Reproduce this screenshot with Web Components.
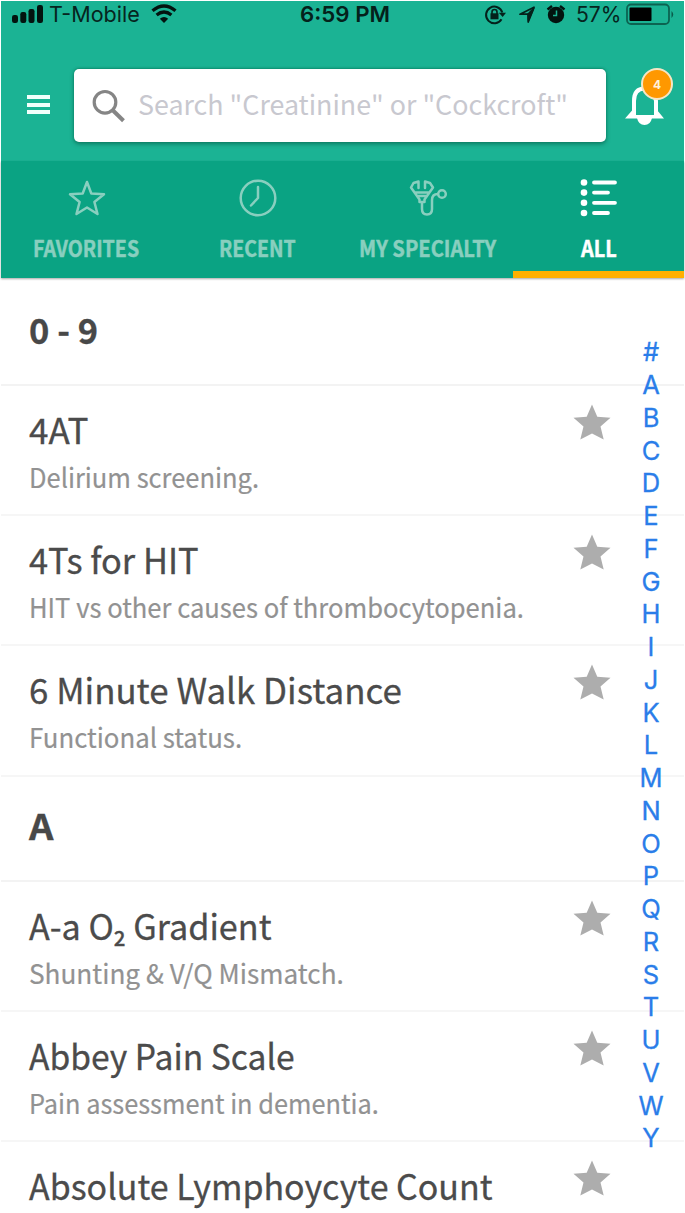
<!DOCTYPE html>
<html lang="en">
<head>
<meta charset="utf-8">
<title>Calculators</title>
<style>
html, body { margin: 0; height: 1213px; overflow: hidden; background: #fff; }
body { font-family: "Noto Sans CJK JP", "Noto Sans", sans-serif; }
</style>
</head>
<body>
<calc-app></calc-app>
<script>
const define = (name, html, setup) => customElements.define(name, class extends HTMLElement {
  connectedCallback() {
    if (this.shadowRoot) return;
    this.attachShadow({ mode: 'open' }).innerHTML = html;
    if (setup) setup(this, this.shadowRoot);
  }
});

/* Text condensed or widened to a given advance width */
define('fit-text', `
<style>
:host { display: inline-block; white-space: nowrap; }
span { display: inline-block; transform-origin: 0 50%; white-space: pre; }
</style><span><slot></slot></span>`, (host, root) => {
  const span = root.querySelector('span');
  const target = +host.getAttribute('width');
  const natural = span.offsetWidth;
  if (target && natural) {
    span.style.transform = `scaleX(${target / natural})`;
    host.style.width = target + 'px';
  }
});

define('status-bar', `
<style>
:host { display: grid; grid-template-columns: 1fr auto 1fr; align-items: center; height: 27px; padding: 0 9px 0 11px;
  font: 400 22px/27px Inter, "Liberation Sans", sans-serif; color: #06251e; box-sizing: border-box; }
div { display: flex; align-items: center; }
svg { display: block; flex: none; }
.time { font-weight: 600; color: #04211b; padding-left: 2px; }
.right { justify-content: flex-end; }
</style>
<div>
  <svg width="32" height="27" viewBox="0 0 32 27" fill="#03130f"><rect x="0" y="14" width="6" height="8" rx="2.2"/><rect x="8.3" y="11" width="6" height="11" rx="2.2"/><rect x="16.5" y="8" width="6" height="14" rx="2.2"/><rect x="25" y="4" width="6" height="18" rx="2.2"/></svg>
  <fit-text width="91" style="margin-left:5px">T-Mobile</fit-text>
  <svg width="28" height="27" viewBox="0 0 28 27" style="margin-left:10px" fill="none" stroke="#03130f" stroke-width="3.3"><path d="M2.5 9.8Q14 .2 25.500 9.800M6.600 14Q14 8 21.400 14"/><path d="M14 22L9.800 17.800Q14 14.200 18.200 17.800Z" fill="#03130f" stroke="none"/></svg>
</div>
<div class="time"><fit-text width="90">6:59 PM</fit-text></div>
<div class="right">
  <svg width="22" height="27" viewBox="0 0 22 27" fill="none" stroke="#04211b"><path d="M17.500 18.200A8.300 8.300 0 1 1 18.300 11.500" stroke-width="2"/><path d="M14.800 11.800H22L18.700 16Z" fill="#04211b" stroke="none"/><rect x="6.500" y="12.300" width="8" height="6" fill="#04211b" stroke="none"/><path d="M8 13V11Q8 8.500 10.500 8.500T13 11V13" stroke-width="1.600"/></svg>
  <svg width="18" height="27" viewBox="0 0 18 27" style="margin-left:12px" fill="none" stroke="#04211b" stroke-width="1.800" stroke-linejoin="round"><path d="M2 13.200L16 6.300L10.200 21V13.200Z"/><path d="M10.200 13L15.500 7.500L10.500 19Z" fill="#04211b"/></svg>
  <svg width="20" height="27" viewBox="0 0 20 27" style="margin-left:10px"><circle cx="10" cy="14" r="8.200" fill="#03130f"/><path d="M1.500 8.500L6 5M18.500 8.500L14 5" stroke="#03130f" stroke-width="2.400"/><path d="M10.500 9.500V14.500H7" fill="none" stroke="#1bb394" stroke-width="1.500"/></svg>
  <fit-text width="45" style="margin-left:10px">57%</fit-text>
  <svg width="49" height="27" viewBox="0 0 49 27" style="margin-left:5px"><rect x="1" y="3.500" width="42" height="19.500" rx="4" fill="none" stroke="#0c6351" stroke-width="1.800"/><rect x="3.500" y="6.500" width="22" height="13.500" rx="1" fill="#000"/><path d="M45.500 10Q49 13.500 45.500 17Z" fill="#0a5b4a"/></svg>
</div>`);

define('search-box', `
<style>
:host { display: flex; align-items: center; width: 532px; height: 73px; box-sizing: border-box; padding-left: 18px;
  border-radius: 5px; background: #fff; color: #c8c8cf; font-size: 26.500px; line-height: 40px;
  box-shadow: 0 2px 4px rgba(0,75,55,.55), 0 -1px 2px rgba(0,120,90,.5); }
svg { flex: none; display: block; }
fit-text { margin: -3px 0 0 12px; }
</style>
<svg width="34" height="36" viewBox="0 0 34 36" fill="none" stroke="#858585"><circle cx="13" cy="14.300" r="10.800" stroke-width="3.200"/><path d="M21 22.500L31.500 32.800" stroke-width="4"/></svg>
<fit-text width="430"><slot></slot></fit-text>`);

define('notification-bell', `
<style>
:host { display: block; position: relative; width: 50px; height: 73px; }
svg { display: block; }
b { position: absolute; left: 17px; top: -1px; width: 28px; height: 28px; border: 2px solid #f6e6c5; border-radius: 50%; background: #ff9800;
  color: #fff1dc; font: 700 12px/29px Inter, sans-serif; text-align: center; }
</style>
<svg width="50" height="73" viewBox="0 0 50 73"><path d="M10 47V32Q10 19.500 20.500 19.500T32 32V47" fill="none" stroke="#fff" stroke-width="4"/><path d="M1 49.500L8.500 41L11 46H31L33 41L40 49.500Z" fill="#fff"/><path d="M13 49H28Q26.500 56 20.500 56T13 49Z" fill="#fff"/></svg>
<b><slot></slot></b>`);

define('app-header', `
<style>
:host { display: block; height: 160px; background: #1bb394; box-sizing: border-box; }
.row { display: flex; align-items: center; height: 73px; padding: 41px 0 0 26px; }
.menu { display: grid; gap: 3.500px; width: 22.500px; margin: -2px 24.500px 0 0; }
.menu i { height: 4px; background: #f2fffb; }
notification-bell { margin-left: 18px; }
</style>
<status-bar></status-bar>
<div class="row"><div class="menu"><i></i><i></i><i></i></div>
<search-box>Search "Creatinine" or "Cockcroft"</search-box><notification-bell>4</notification-bell></div>`);

define('tab-item', `
<style>
:host { display: flex; flex-direction: column; align-items: center; box-sizing: border-box; height: 117px; padding-top: 16px;
  color: #89cfbf; font-size: 22px; font-weight: 700; line-height: 32px; }
:host([active]) { color: #fff; border-bottom: 7px solid #ffb000; }
.label { margin-top: 12px; -webkit-text-stroke: .5px currentColor; }
</style>
<slot name="icon"></slot><div class="label"><slot></slot></div>`);

define('tab-bar', `
<style>
:host { display: grid; grid-template-columns: repeat(4, 1fr); height: 117px; background: #0aa383; box-shadow: 0 1px 2px rgba(0,0,0,.35); position: relative; }
svg { display: block; margin-left: 2px; fill: none; stroke: currentColor; stroke-width: 2.500; stroke-linejoin: round; stroke-linecap: round; }
</style>
<tab-item><svg slot="icon" width="42" height="42" viewBox="0 0 42 42"><path d="M21 5L25.300 16.500L38 17.200L28.400 25L31.500 37L21 30.500L10.500 37L13.600 25L4 17.200L16.700 16.500Z"/></svg><fit-text width="106">FAVORITES</fit-text></tab-item>
<tab-item><svg slot="icon" width="42" height="42" viewBox="0 0 42 42"><circle cx="21" cy="21" r="17.300"/><path d="M21 10V21L14 28.500"/></svg><fit-text width="77">RECENT</fit-text></tab-item>
<tab-item><svg slot="icon" width="42" height="42" viewBox="0 0 42 42" style="margin-left:0"><path d="M11.500 4.500L6.500 6L4 10.500L12.500 22.500V25H17.500V22.500L26 10.500L23 6L18 4.500M11.500 4.500V11M18 4.500V11M8 15.500H22M10.500 19H19.500M15 25V32Q15 37.500 20 37.500T25 32V23Q25 17 31 17"/><circle cx="35" cy="17" r="3.800"/></svg><fit-text width="137">MY SPECIALTY</fit-text></tab-item>
<tab-item active><svg slot="icon" width="42" height="42" viewBox="0 0 42 42" style="margin-left:0"><g fill="currentColor" stroke="none"><circle cx="6" cy="5.500" r="3.300"/><circle cx="6" cy="15.600" r="3.300"/><circle cx="6" cy="25.800" r="3.300"/><circle cx="6" cy="36" r="3.300"/></g><path stroke-width="3.800" d="M16 5.500H37M16 15.600H30M16 25.800H37M16 36H30"/></svg><fit-text width="36">ALL</fit-text></tab-item>`);

define('section-heading', `
<style>
:host { display: block; height: 105px; box-sizing: border-box; padding: 22px 28px 0; border-bottom: 2px solid #f3f3f3;
  font-size: 35px; font-weight: 700; line-height: 52px; color: #484848; -webkit-text-stroke: .3px #484848; }
</style><slot></slot>`);

define('calc-row', `
<style>
:host { display: flex; height: 130.200px; box-sizing: border-box; border-bottom: 2px solid #f6f6f6; padding: 0 72px 0 28px; justify-content: space-between; }
.title { margin-top: 17px; font-size: 35px; line-height: 52px; color: #4b4b4b; -webkit-text-stroke: .3px #4b4b4b; }
.sub { margin-top: 4px; font-size: 26.500px; line-height: 36px; color: #929292; -webkit-text-stroke: .2px #929292; }
svg { display: block; margin-top: 17px; flex: none; }
</style>
<div><div class="title"><slot></slot></div><div class="sub"><slot name="sub"></slot></div></div>
<svg width="40" height="40" viewBox="0 0 40 40"><path d="M20 1.500L25.300 13.800L38.500 14.800L28.500 23.600L31.700 36.500L20 30.500L8.300 36.500L11.500 23.600L1.500 14.800L14.700 13.800Z" fill="#adadad"/></svg>`);

define('letter-index', `
<style>
:host { display: flex; flex-direction: column; position: absolute; right: 17px; top: 336.300px; width: 34px; text-align: center;
  font: 400 25.500px/32.750px Inter, "Liberation Sans", sans-serif; color: #2a7de9; -webkit-text-stroke: .3px #2a7de9; }
span { height: 32.750px; }
</style>`, (host, root) => {
  for (const letter of '#ABCDEFGHIJKLMNOPQRSTUVWY') {
    const item = document.createElement('span');
    item.textContent = letter;
    root.append(item);
  }
});

define('calc-app', `
<style>
:host { display: block; position: relative; width: 685px; height: 1213px; box-sizing: border-box; padding: 1px 1px 0; background: #fff; overflow: hidden; }
main { padding-top: 3px; }
small { font-size: 21px; line-height: 0; position: relative; top: 6px; font-weight: 500; }
</style>
<app-header></app-header>
<tab-bar></tab-bar>
<main>
<section-heading><fit-text width="69">0 - 9</fit-text></section-heading>
<calc-row><fit-text width="60">4AT</fit-text><fit-text slot="sub" width="230">Delirium screening.</fit-text></calc-row>
<calc-row><fit-text width="170">4Ts for HIT</fit-text><fit-text slot="sub" width="495">HIT vs other causes of thrombocytopenia.</fit-text></calc-row>
<calc-row><fit-text width="373">6 Minute Walk Distance</fit-text><fit-text slot="sub" width="213">Functional status.</fit-text></calc-row>
<section-heading><fit-text width="24">A</fit-text></section-heading>
<calc-row><fit-text width="243">A-a O<small>2</small> Gradient</fit-text><fit-text slot="sub" width="315">Shunting &amp; V/Q Mismatch.</fit-text></calc-row>
<calc-row><fit-text width="266">Abbey Pain Scale</fit-text><fit-text slot="sub" width="350">Pain assessment in dementia.</fit-text></calc-row>
<calc-row><fit-text width="464">Absolute Lymphoycyte Count</fit-text></calc-row>
</main>
<letter-index></letter-index>`);
</script>
</body>
</html>
